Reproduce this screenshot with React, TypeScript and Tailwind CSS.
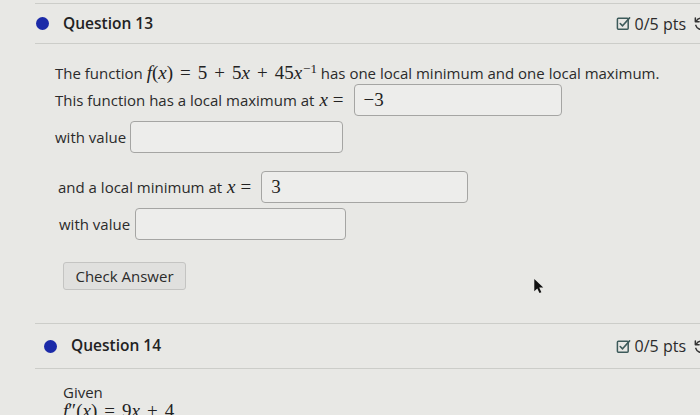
import React from 'react';

const ui = { fontFamily: '"Open Sans", "Noto Sans", sans-serif' };
const mathFont = { fontFamily: '"Liberation Serif", "DejaVu Serif", serif' };

function M({ children }: { children: React.ReactNode }) {
  return (
    <span className="whitespace-nowrap text-[19px] leading-[20px] text-[#222]" style={mathFont}>
      {children}
    </span>
  );
}

function V({ children }: { children: React.ReactNode }) {
  return <i className="italic">{children}</i>;
}

function Op({ children, wide }: { children: React.ReactNode; wide?: boolean }) {
  return <span className={wide ? 'mx-[7px]' : 'mx-[5px]'}>{children}</span>;
}

function Pts() {
  return (
    <div className="mr-[-8px] flex items-center gap-[4px] text-[16px] text-[#2b2b2b]">
      <svg viewBox="0 0 16 16" className="h-[15px] w-[15px] text-[#3c5a5a]" fill="none" aria-hidden>
        <rect x="1.5" y="2.5" width="11.5" height="11.5" rx="1" stroke="currentColor" strokeWidth="1.6" />
        <path d="M4.5 8l2.5 2.5L14.5 2" stroke="currentColor" strokeWidth="1.7" strokeLinecap="round" strokeLinejoin="round" />
      </svg>
      <span>0/5 pts</span>
      <svg viewBox="0 0 16 16" className="ml-[3px] h-[15px] w-[15px] text-[#333]" fill="none" aria-hidden>
        <path d="M3.5 5.5A6 6 0 1 1 3 10" stroke="currentColor" strokeWidth="1.6" strokeLinecap="round" />
        <path d="M2.5 2v4h4" stroke="currentColor" strokeWidth="1.6" strokeLinecap="round" strokeLinejoin="round" />
      </svg>
    </div>
  );
}

function Box({ w, value }: { w: string; value?: string }) {
  return (
    <div className={`${w} flex h-[32px] items-center rounded-[4px] border border-[#a5a5a3] bg-[#ededeb] pl-[9px]`}>
      {value && <M>{value}</M>}
    </div>
  );
}

function Header({ title, h }: { title: string; h: string }) {
  return (
    <div className={`${h} flex items-center justify-between`}>
      <div className="flex items-center gap-[14px]">
        <span className="ml-[1px] h-[13px] w-[13px] rounded-full bg-[#1b2aa8]" />
        <span className="text-[15.5px] font-semibold text-[#222]">{title}</span>
      </div>
      <Pts />
    </div>
  );
}

export default function App() {
  return (
    <div className="relative h-[415px] w-[700px] overflow-hidden bg-[#e8e8e5] text-[#2b2b2b]" style={ui}>
      <div className="pl-[35px] pt-[3px]">
        <div className="border-t border-[#cccdc9]" />
        <Header title="Question 13" h="h-[39px]" />
        <div className="border-t border-[#cccdc9]" />

        <div className="pl-[20px] pt-[18px] text-[15px]">
          <div className="flex h-[22px] items-center">
            <span>The function&nbsp;</span>
            <M>
              <V>f</V>(<V>x</V>)<Op wide>=</Op>5<Op wide>+</Op>5<V>x</V>
              <Op wide>+</Op>45<V>x</V>
              <sup className="ml-[1px] text-[13px]">−1</sup>
            </M>
            <span>&nbsp;has one local minimum and one local maximum.</span>
          </div>
          <div className="flex items-center gap-[5px]">
            <span>This function has a local maximum at</span>
            <M>
              <V>x</V>
              <Op>=</Op>
            </M>
            <Box w="w-[208px]" value="−3" />
          </div>
          <div className="mt-[5px] flex items-center gap-[4px]">
            <span>with value</span>
            <Box w="w-[213px]" />
          </div>

          <div className="mt-[18px] flex items-center gap-[5px] pl-[3px]">
            <span>and a local minimum at</span>
            <M>
              <V>x</V>
              <Op>=</Op>
            </M>
            <Box w="w-[207px]" value="3" />
          </div>
          <div className="mt-[5px] flex items-center gap-[5px] pl-[4px]">
            <span>with value</span>
            <Box w="w-[211px]" />
          </div>

          <button className="ml-[8px] mt-[22px] h-[28px] w-[123px] rounded-[3px] border border-[#c4c4c2] bg-[#e0e0de] text-[15px] text-[#2b2b2b]">
            Check Answer
          </button>
        </div>

        <div className="mt-[33px] border-t border-[#cccdc9]" />
        <div className="pl-[8px]">
          <Header title="Question 14" h="h-[44px]" />
        </div>
        <div className="border-t border-[#cccdc9]" />
        <div className="pl-[28px] pt-[14px] text-[15px] leading-[18px]">
          <div>Given</div>
          <div>
            <M>
              <V>f</V>″(<V>x</V>)<Op wide>=</Op>9<V>x</V>
              <Op wide>+</Op>4
            </M>
          </div>
        </div>
      </div>

      <svg viewBox="0 0 12 18" className="absolute left-[533px] top-[278px] h-[17px] w-[12px]" aria-hidden>
        <path d="M1 1v13l3.2-3 2.3 5 2-1-2.3-5h4.3z" fill="#111" />
      </svg>
    </div>
  );
}
